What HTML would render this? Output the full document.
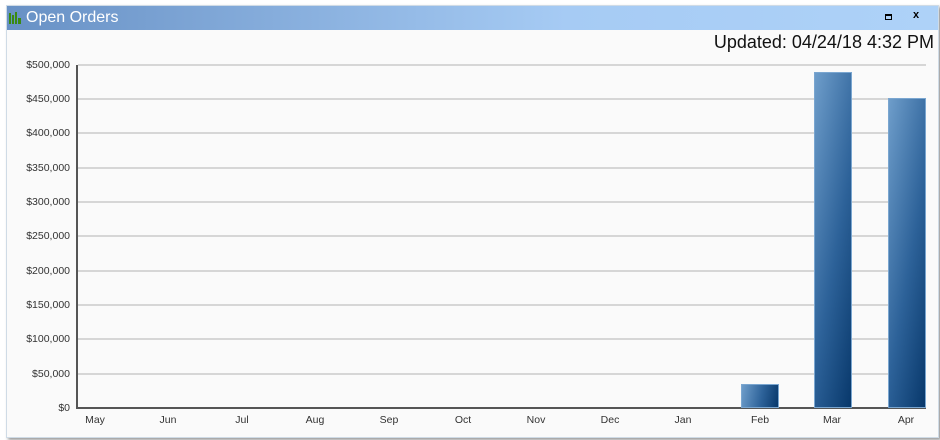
<!DOCTYPE html>
<html><head><style>
body{margin:0;width:940px;height:440px;background:#fff;font-family:"Liberation Sans",sans-serif;position:relative;overflow:hidden}
.win{position:absolute;left:6px;top:5px;width:931px;height:431px;background:#fafafa;border:1px solid #cfdbe6;box-shadow:2px 2px 3px #999}
.title{position:absolute;left:0;top:0;right:0;height:24px;background:linear-gradient(to right,#6891c5,#a6cbf4 60%,#aed2f8)}
.title span{position:absolute;left:19px;top:3px;color:#fff;font-size:16px}
.upd{position:absolute;right:6px;top:32px;font-size:18px;color:#111}
.g{position:absolute;left:78px;width:848px;height:2px;background:#d6d6d6}
.yl{position:absolute;right:870px;font-size:10.5px;color:#333;text-align:right;width:70px}
.xl{position:absolute;top:414px;font-size:10.5px;color:#333;width:40px;text-align:center}
.bar{position:absolute;background:linear-gradient(100deg,#6e9dca,#2d6299 55%,#08386b);border:1px solid #7aa6d0;box-sizing:border-box}
</style></head><body>
<div class="win">
<div class="title">
<svg style="position:absolute;left:2px;top:6px" width="14" height="12"><rect x="0" y="1" width="2" height="11" fill="#3a8a12"/><rect x="3" y="3" width="2" height="9" fill="#3a8a12"/><rect x="6" y="0" width="2" height="12" fill="#3a8a12"/><rect x="9" y="6" width="3" height="6" fill="#3a8a12"/></svg>
<span>Open Orders</span>
<svg style="position:absolute;left:878px;top:7px" width="8" height="8"><rect x="0.5" y="1.5" width="6" height="5" fill="none" stroke="#000" stroke-width="1"/><rect x="0" y="1" width="7" height="2" fill="#000"/></svg>
<div style="position:absolute;left:906px;top:3px;font-size:11px;font-weight:bold">x</div>
</div>
</div>
<div class="upd">Updated: 04/24/18 4:32 PM</div>
<div class="g" style="top:64px"></div>
<div class="g" style="top:98px"></div>
<div class="g" style="top:132px"></div>
<div class="g" style="top:167px"></div>
<div class="g" style="top:201px"></div>
<div class="g" style="top:235px"></div>
<div class="g" style="top:270px"></div>
<div class="g" style="top:304px"></div>
<div class="g" style="top:338px"></div>
<div class="g" style="top:373px"></div>
<div style="position:absolute;left:76px;top:65px;width:2px;height:344px;background:#555"></div>
<div style="position:absolute;left:76px;top:407px;width:850px;height:2px;background:#555"></div>
<div class="yl" style="top:59px">$500,000</div>
<div class="yl" style="top:93px">$450,000</div>
<div class="yl" style="top:127px">$400,000</div>
<div class="yl" style="top:162px">$350,000</div>
<div class="yl" style="top:196px">$300,000</div>
<div class="yl" style="top:230px">$250,000</div>
<div class="yl" style="top:265px">$200,000</div>
<div class="yl" style="top:299px">$150,000</div>
<div class="yl" style="top:333px">$100,000</div>
<div class="yl" style="top:368px">$50,000</div>
<div class="yl" style="top:402px">$0</div>
<div class="bar" style="left:741px;top:384px;width:38px;height:24px"></div>
<div class="bar" style="left:814px;top:72px;width:38px;height:336px"></div>
<div class="bar" style="left:888px;top:98px;width:38px;height:310px"></div>
<div class="xl" style="left:75px">May</div>
<div class="xl" style="left:148px">Jun</div>
<div class="xl" style="left:222px">Jul</div>
<div class="xl" style="left:295px">Aug</div>
<div class="xl" style="left:369px">Sep</div>
<div class="xl" style="left:443px">Oct</div>
<div class="xl" style="left:516px">Nov</div>
<div class="xl" style="left:590px">Dec</div>
<div class="xl" style="left:663px">Jan</div>
<div class="xl" style="left:740px">Feb</div>
<div class="xl" style="left:812px">Mar</div>
<div class="xl" style="left:886px">Apr</div>
</body></html>
